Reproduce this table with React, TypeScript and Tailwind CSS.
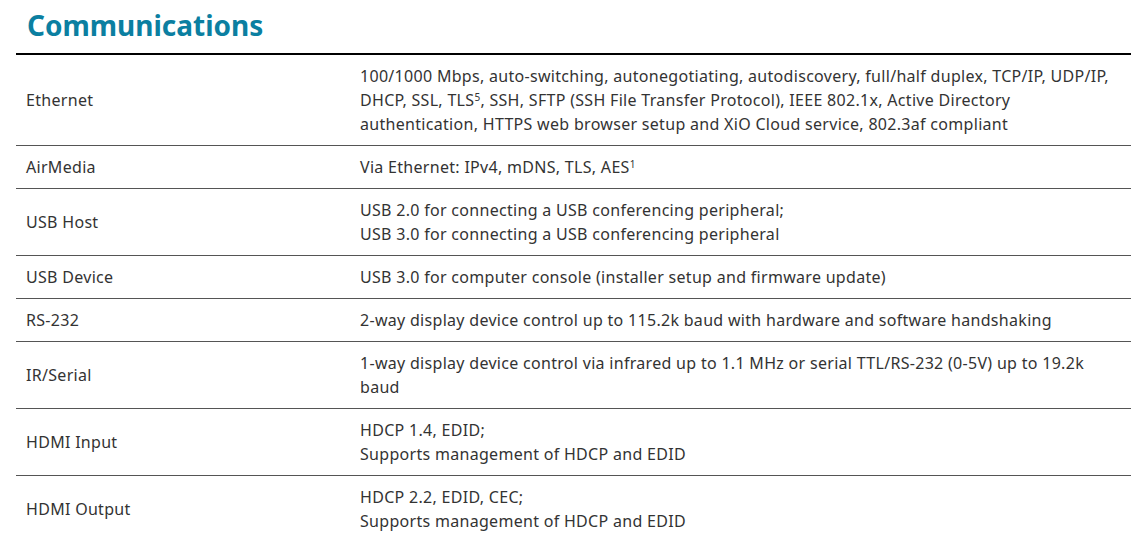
const rows: { label: string; value: React.ReactNode }[] = [
  {
    label: 'Ethernet',
    value: (
      <>
        100/1000 Mbps, auto-switching, autonegotiating, autodiscovery, full/half duplex, TCP/IP, UDP/IP, DHCP, SSL, TLS
        <sup className="text-[10px]">5</sup>, SSH, SFTP (SSH File Transfer Protocol), IEEE 802.1x, Active Directory
        authentication, HTTPS web browser setup and XiO Cloud service, 802.3af compliant
      </>
    ),
  },
  {
    label: 'AirMedia',
    value: (
      <>
        Via Ethernet: IPv4, mDNS, TLS, AES<sup className="text-[10px]">1</sup>
      </>
    ),
  },
  {
    label: 'USB Host',
    value: (
      <>
        USB 2.0 for connecting a USB conferencing peripheral;
        <br />
        USB 3.0 for connecting a USB conferencing peripheral
      </>
    ),
  },
  { label: 'USB Device', value: 'USB 3.0 for computer console (installer setup and firmware update)' },
  { label: 'RS-232', value: '2-way display device control up to 115.2k baud with hardware and software handshaking' },
  {
    label: 'IR/Serial',
    value: '1-way display device control via infrared up to 1.1 MHz or serial TTL/RS-232 (0-5V) up to 19.2k baud',
  },
  {
    label: 'HDMI Input',
    value: (
      <>
        HDCP 1.4, EDID;
        <br />
        Supports management of HDCP and EDID
      </>
    ),
  },
  {
    label: 'HDMI Output',
    value: (
      <>
        HDCP 2.2, EDID, CEC;
        <br />
        Supports management of HDCP and EDID
      </>
    ),
  },
];

export default function App() {
  return (
    <div className="bg-white min-h-screen px-4 pt-[6px] font-['Noto_Sans',sans-serif] text-[#333]">
      <h2 className="px-[11px] text-[28px] leading-[38px] font-bold text-[#0b7fa1] mb-[9px]">Communications</h2>
      <table className="w-[1115px] border-collapse border-t-2 border-black">
        <tbody>
          {rows.map((r, i) => (
            <tr key={r.label} className={i < rows.length - 1 ? 'border-b border-[#555]' : ''}>
              <td className="w-[334px] px-[10px] py-[9px] align-middle text-[16px] leading-6 tracking-[0.3px]">
                {r.label}
              </td>
              <td className="px-[10px] py-[9px] align-middle text-[16px] leading-6 tracking-[0.3px]">{r.value}</td>
            </tr>
          ))}
        </tbody>
      </table>
    </div>
  );
}
